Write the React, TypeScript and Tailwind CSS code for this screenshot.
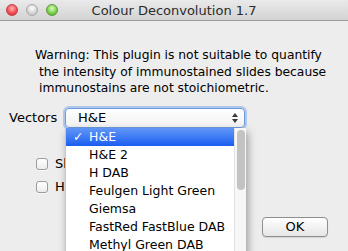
import React from 'react';

const menuItems = ['H&E 2', 'H DAB', 'Feulgen Light Green', 'Giemsa', 'FastRed FastBlue DAB', 'Methyl Green DAB', 'H AEC'];

const Checkbox: React.FC<{ label: string }> = ({ label }) => (
  <div className="flex items-center gap-[7px] h-[12px]">
    <div className="w-[12px] h-[12px] rounded-[3px] border border-[#9c9c9c] bg-gradient-to-b from-white to-[#ececec] shadow-[0_1px_0_rgba(255,255,255,0.6)]" />
    <span className="text-[13px] text-black leading-none">{label}</span>
  </div>
);

const App: React.FC = () => {
  return (
    <div
      className="w-[348px] h-[251px] overflow-hidden bg-[#ededed] text-black"
      style={{ fontFamily: '"Lucida Grande", "DejaVu Sans", sans-serif' }}
    >
      {/* Title bar */}
      <div className="h-[21px] grid grid-cols-[1fr_auto_1fr] items-center border-b border-[#9d9d9d] bg-gradient-to-b from-[#eaeaea] to-[#d3d3d3]">
        <div className="flex items-center gap-[8px] pl-[6px]">
          <div className="w-[12px] h-[12px] rounded-full border border-[#c2434a] bg-[radial-gradient(circle_at_50%_35%,#ffb3b3,#f0474e_60%,#c8272f)]" />
          <div className="w-[12px] h-[12px] rounded-full border border-[#a9a9a9] bg-[radial-gradient(circle_at_50%_35%,#ffffff,#d2d2d2_60%,#b0b0b0)]" />
          <div className="w-[12px] h-[12px] rounded-full border border-[#5d9b3b] bg-[radial-gradient(circle_at_50%_35%,#d8ffb8,#78cc4a_60%,#4b9c26)]" />
        </div>
        <div className="text-[13px] text-[#2b2b2b] leading-none">Colour Deconvolution 1.7</div>
        <div />
      </div>

      {/* Warning */}
      <div className="mt-[26px] pl-[35px] text-[12.3px] leading-[16.5px] whitespace-nowrap">
        <div>Warning: This plugin is not suitable to quantify</div>
        <div className="pl-[4px]">the intensity of immunostained slides because</div>
        <div className="pl-[4px]">immunostains are not stoichiometric.</div>
      </div>

      {/* Vectors row */}
      <div className="mt-[11px] flex items-center pl-[9px] gap-[10px]">
        <span className="text-[13px] w-[46px]">Vectors</span>
        <div className="relative">
          <div className="w-[180px] h-[20px] rounded-[4px] border border-[#6d9ad8] shadow-[0_0_0_2px_rgba(120,165,230,0.55)] bg-gradient-to-b from-white to-[#f1f1f1] flex items-center justify-between pl-[12px] pr-[6px]">
            <span className="text-[13px] leading-none">H&amp;E</span>
            <div className="flex flex-col items-center gap-[2px]">
              <div className="w-0 h-0 border-l-[3px] border-r-[3px] border-b-[4px] border-l-transparent border-r-transparent border-b-[#3a3a3a]" />
              <div className="w-0 h-0 border-l-[3px] border-r-[3px] border-t-[4px] border-l-transparent border-r-transparent border-t-[#3a3a3a]" />
            </div>
          </div>

          {/* Open menu */}
          <div className="absolute left-0 top-[20px] w-[181px] h-[140px] bg-white border-l border-[#c8c8c8] shadow-[2px_4px_8px_rgba(0,0,0,0.35)] flex z-10">
            <div className="flex-1 flex flex-col">
              <div className="h-[18px] flex items-center bg-gradient-to-b from-[#6196f6] to-[#1a5cf2] text-white text-[12.5px] pt-[1px]">
                <span className="w-[23px] pl-[7px] font-bold">✓</span>
                <span>H&amp;E</span>
              </div>
              {menuItems.map((item) => (
                <div key={item} className="h-[18px] flex items-center pt-[2px] pl-[23px] text-[12.5px] text-black whitespace-nowrap">
                  {item}
                </div>
              ))}
            </div>
            <div className="w-[12px] bg-[#f7f7f7] border-l border-[#e2e2e2] flex justify-center pt-[2px]">
              <div className="w-[8px] h-[60px] rounded-full bg-[#c3c3c3]" />
            </div>
          </div>
        </div>
      </div>

      {/* Checkboxes */}
      <div className="mt-[30px] pl-[36px] flex flex-col gap-[11px]">
        <Checkbox label="Show matrices" />
        <Checkbox label="Hide legend" />
      </div>

      {/* OK */}
      <div className="mt-[24px] flex justify-end pr-[20px]">
        <button className="w-[66px] h-[20px] rounded-[4px] border border-[#8e8e8e] bg-gradient-to-b from-white to-[#e6e6e6] text-[13px] leading-none shadow-[0_1px_1px_rgba(0,0,0,0.1)]">
          OK
        </button>
      </div>
    </div>
  );
};

export default App;
